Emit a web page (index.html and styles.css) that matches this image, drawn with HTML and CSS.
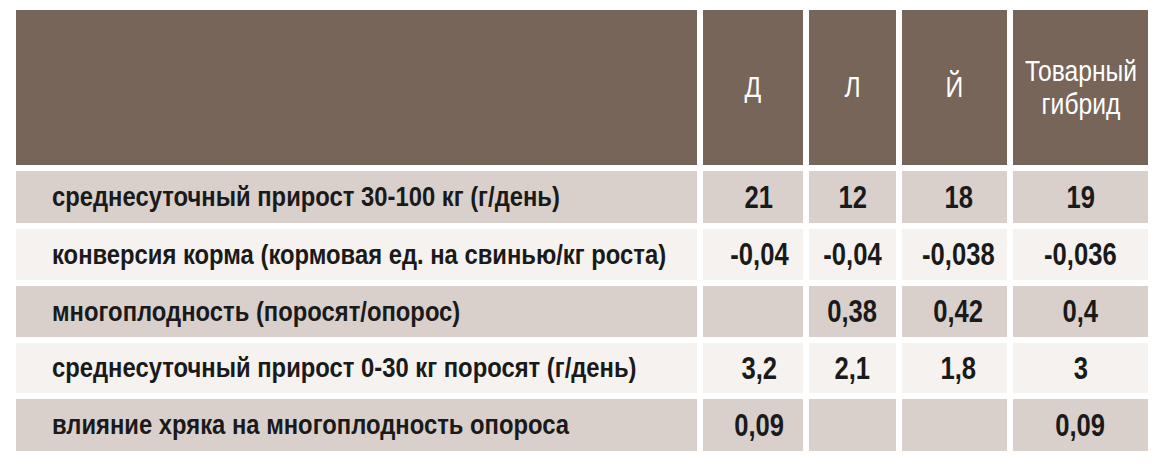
FILE: index.html
```html
<!DOCTYPE html>
<html lang="ru">
<head>
<meta charset="utf-8">
<title>Таблица</title>
<link rel="stylesheet" href="styles.css">
</head>
<body>
<div class="page">
  <div class="grid">
    <div class="cell head"></div>
    <div class="cell head"><span class="t">Д</span></div>
    <div class="cell head"><span class="t">Л</span></div>
    <div class="cell head"><span class="t">Й</span></div>
    <div class="cell head"><span class="t">Товарный<br>гибрид</span></div>

    <div class="cell label dark"><span class="t">среднесуточный прирост 30-100 кг (г/день)</span></div>
    <div class="cell num dark col-d"><span class="t">21</span></div>
    <div class="cell num dark"><span class="t">12</span></div>
    <div class="cell num dark col-y"><span class="t">18</span></div>
    <div class="cell num dark"><span class="t">19</span></div>

    <div class="cell label light"><span class="t">конверсия корма (кормовая ед. на свинью/кг роста)</span></div>
    <div class="cell num light col-d"><span class="t">-0,04</span></div>
    <div class="cell num light"><span class="t">-0,04</span></div>
    <div class="cell num light col-y"><span class="t">-0,038</span></div>
    <div class="cell num light"><span class="t">-0,036</span></div>

    <div class="cell label dark"><span class="t">многоплодность (поросят/опорос)</span></div>
    <div class="cell num dark col-d"></div>
    <div class="cell num dark"><span class="t">0,38</span></div>
    <div class="cell num dark col-y"><span class="t">0,42</span></div>
    <div class="cell num dark"><span class="t">0,4</span></div>

    <div class="cell label light"><span class="t">среднесуточный прирост 0-30 кг поросят (г/день)</span></div>
    <div class="cell num light col-d"><span class="t">3,2</span></div>
    <div class="cell num light"><span class="t">2,1</span></div>
    <div class="cell num light col-y"><span class="t">1,8</span></div>
    <div class="cell num light"><span class="t">3</span></div>

    <div class="cell label dark"><span class="t">влияние хряка на многоплодность опороса</span></div>
    <div class="cell num dark col-d"><span class="t">0,09</span></div>
    <div class="cell num dark"></div>
    <div class="cell num dark col-y"></div>
    <div class="cell num dark"><span class="t">0,09</span></div>
  </div>
</div>
</body>
</html>
```

FILE: styles.css
```css
html, body {
  margin: 0;
  padding: 0;
  background: #ffffff;
}

.page {
  padding: 10px 16px;
  font-family: "Liberation Sans", Arial, sans-serif;
}

.grid {
  display: grid;
  grid-template-columns: 681px 100px 87px 105px 135px;
  grid-template-rows: 155px 52px 51px 51px 50px 52px;
  column-gap: 6px;
  row-gap: 6px;
}

.cell {
  display: flex;
  align-items: center;
  justify-content: center;
  min-width: 0;
}

.t {
  display: inline-block;
  white-space: nowrap;
  transform: scaleX(0.85);
  transform-origin: center center;
}

.head {
  background: #766558;
  color: #ffffff;
  font-size: 29px;
  line-height: 33px;
  text-align: center;
  font-weight: 400;
}

.dark {
  background: #d9d0cc;
}

.light {
  background: #f6f2ef;
}

.label {
  justify-content: flex-start;
  padding-left: 36px;
  font-size: 28px;
  font-weight: 700;
  color: #1a1a1a;
}

.label .t {
  transform-origin: left center;
}

.num {
  font-size: 32px;
  font-weight: 700;
  color: #1a1a1a;
}

.num .t {
  transform: scaleX(0.8);
}

.num.col-d {
  padding-left: 12px;
}

.num.col-y {
  padding-left: 8px;
}
```
